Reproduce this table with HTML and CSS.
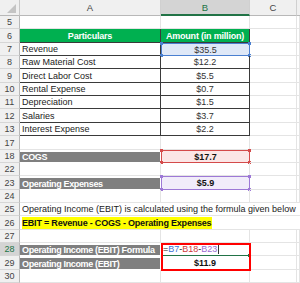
FILE: index.html
```html
<!DOCTYPE html>
<html>
<head>
<meta charset="utf-8">
<link rel="stylesheet" href="styles.css">
</head>
<body>
<div class="sheet">
  <div class="row hh">
    <div class="corner"><span class="tri"></span></div>
    <div class="ch">A</div>
    <div class="ch sel">B</div>
    <div class="ch">C</div>
    <div class="ch last"></div>
  </div>

  <div class="row h13"><div class="rh">5</div><div class="c"></div><div class="c"></div><div class="c"></div><div class="c"></div></div>
  <div class="row h14"><div class="rh">6</div><div class="c hdr">Particulars</div><div class="c hdr">Amount (in million)</div><div class="c"></div><div class="c"></div></div>
  <div class="row h13"><div class="rh">7</div><div class="c ta">Revenue</div><div class="c tb ref blue">$35.5<i class="k tl"></i><i class="k tr"></i><i class="k bl"></i><i class="k br"></i></div><div class="c"></div><div class="c"></div></div>
  <div class="row h13"><div class="rh">8</div><div class="c ta">Raw Material Cost</div><div class="c tb">$12.2</div><div class="c"></div><div class="c"></div></div>
  <div class="row h14"><div class="rh">9</div><div class="c ta">Direct Labor Cost</div><div class="c tb">$5.5</div><div class="c"></div><div class="c"></div></div>
  <div class="row h13"><div class="rh">10</div><div class="c ta">Rental Expense</div><div class="c tb">$0.7</div><div class="c"></div><div class="c"></div></div>
  <div class="row h13"><div class="rh">11</div><div class="c ta">Depreciation</div><div class="c tb">$1.5</div><div class="c"></div><div class="c"></div></div>
  <div class="row h14"><div class="rh">12</div><div class="c ta">Salaries</div><div class="c tb">$3.7</div><div class="c"></div><div class="c"></div></div>
  <div class="row h13"><div class="rh">13</div><div class="c ta">Interest Expense</div><div class="c tb">$2.2</div><div class="c"></div><div class="c"></div></div>
  <div class="row h14"><div class="rh">17</div><div class="c"></div><div class="c"></div><div class="c"></div><div class="c"></div></div>
  <div class="row h13"><div class="rh">18</div><div class="c gray">COGS</div><div class="c ref red bold">$17.7<i class="k tl"></i><i class="k tr"></i><i class="k bl"></i><i class="k br"></i></div><div class="c"></div><div class="c"></div></div>
  <div class="row h13"><div class="rh">22</div><div class="c"></div><div class="c"></div><div class="c"></div><div class="c"></div></div>
  <div class="row h14"><div class="rh">23</div><div class="c gray">Operating Expenses</div><div class="c ref purple bold">$5.9<i class="k tl"></i><i class="k tr"></i><i class="k bl"></i><i class="k br"></i></div><div class="c"></div><div class="c"></div></div>
  <div class="row h13"><div class="rh">24</div><div class="c"></div><div class="c"></div><div class="c"></div><div class="c"></div></div>
  <div class="row h13"><div class="rh">25</div><div class="c span">Operating Income (EBIT) is calculated using the formula given below</div></div>
  <div class="row h14"><div class="rh">26</div><div class="c span"><span class="yellow">EBIT = Revenue - COGS - Operating Expenses</span></div></div>
  <div class="row h13"><div class="rh">27</div><div class="c"></div><div class="c"></div><div class="c"></div><div class="c"></div></div>
  <div class="row h13"><div class="rh rsel">28</div><div class="c gray">Operating Income (EBIT) Formula</div><div class="c edit"><span>=</span><span class="fb">B7</span><span>-</span><span class="fr">B18</span><span>-</span><span class="fp">B23</span><span class="caret"></span><i class="fill"></i></div><div class="c"></div><div class="c"></div></div>
  <div class="row h14"><div class="rh">29</div><div class="c gray">Operating Income (EBIT)</div><div class="c bold">$11.9</div><div class="c"></div><div class="c"></div></div>
  <div class="row h13"><div class="rh">30</div><div class="c"></div><div class="c"></div><div class="c"></div><div class="c"></div></div>

  <div class="redbox"></div>
</div>
</body>
</html>
```

FILE: styles.css
```css
* { box-sizing: border-box; margin: 0; padding: 0; }
html, body { background: #fff; }
body { margin: 0; font-family: "Liberation Sans", Arial, sans-serif; font-size: 9px; color: #222; }

.sheet { position: relative; width: 300px; height: 283px; overflow: hidden; }

.row { display: grid; grid-template-columns: 20px 141px 89px 47px 3px; }
.hh { height: 16px; }
.h13 { height: 13px; }
.h14 { height: 14px; }

.corner { position: relative; background: #f0f0f0; border-right: 1px solid #c8c8c8; border-bottom: 1px solid #b8b8b8; }
.tri { position: absolute; right: 3px; bottom: 2px; width: 0; height: 0; border-left: 9px solid transparent; border-bottom: 9px solid #c4c4c4; }

.ch { display: flex; align-items: center; justify-content: center; background: #f0f0f0; border-right: 1px solid #d0d0d0; border-bottom: 1px solid #b8b8b8; color: #444; font-size: 9.5px; }
.ch.sel { background: #d4d4d4; color: #217346; border-bottom: 2px solid #217346; }
.ch.last { border-right: none; }

.rh { display: flex; align-items: center; justify-content: center; background: #f0f0f0; border-right: 1px solid #b8b8b8; border-bottom: 1px solid #d6d6d6; color: #444; font-size: 9px; }
.rh.rsel { background: #d4d4d4; color: #217346; }

.c { position: relative; display: flex; align-items: center; border-right: 1px solid #e4e4e4; border-bottom: 1px solid #e4e4e4; white-space: nowrap; overflow: hidden; }

.hdr { background: #00b050; color: #fff; font-weight: bold; letter-spacing: -0.2px; justify-content: center; border-right: 1px solid #3a3a3a; border-bottom: 1px solid #3a3a3a; }
.ta { padding-left: 2px; border-right: 1px solid #3a3a3a; border-bottom: 1px solid #3a3a3a; }
.tb { justify-content: center; border-right: 1px solid #3a3a3a; border-bottom: 1px solid #3a3a3a; color: #333; }

.gray { background: #7f7f7f; color: #fff; font-weight: bold; letter-spacing: -0.35px; padding-left: 2px; border-top: 2px solid #fff; border-bottom: 1px solid #fff; border-right: 1px solid #fff; }

.bold { justify-content: center; font-weight: bold; color: #111; }

.ref { justify-content: center; overflow: visible; }
.ref.blue { background: #dfe8f7; border: 1px solid #4a7fd0; }
.ref.red { background: #fbe6e6; border: 1px solid #d44a4a; }
.ref.purple { background: #f1ecfa; border: 1px solid #9d78d6; }
.k { position: absolute; width: 3px; height: 3px; }
.blue .k { background: #4a7fd0; }
.red .k { background: #d44a4a; }
.purple .k { background: #9d78d6; }
.k.tl { left: -2px; top: -2px; }
.k.tr { right: -2px; top: -2px; }
.k.bl { left: -2px; bottom: -2px; }
.k.br { right: -2px; bottom: -2px; }

.span { grid-column: 2 / -1; border-right: none; overflow: visible; padding-left: 2px; color: #222; }
.yellow { background: #ffff00; font-weight: bold; letter-spacing: -0.2px; color: #111; padding: 1px 1px 1px 0; }

.edit { padding-left: 2px; border-bottom: 1px solid #217346; overflow: visible; color: #111; }
.fb { color: #3b73d6; }
.fr { color: #d03a3a; }
.fp { color: #9a6bd2; }
.caret { width: 1px; height: 10px; background: #333; margin-left: 1px; }
.fill { position: absolute; right: -2px; bottom: -2px; width: 3px; height: 3px; background: #217346; }

.redbox { position: absolute; left: 161px; top: 243px; width: 90px; height: 28px; border: 2px solid #ff0000; }
```
